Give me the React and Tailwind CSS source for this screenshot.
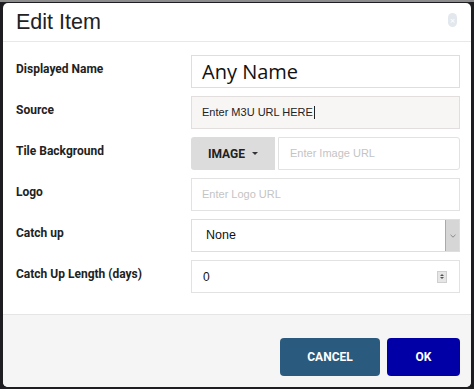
import React from "react";

function Row({ label, children }) {
  return (
    <div className="flex items-start h-[33px]">
      <div className="w-[188px] pt-[7px] pl-[13px] text-[12px] font-bold text-[#222] leading-[14px]" style={{ fontFamily: "Roboto, 'Liberation Sans', sans-serif" }}>
        {label}
      </div>
      <div className="flex-1 h-[33px]">{children}</div>
    </div>
  );
}

export default function App() {
  const f = { fontFamily: "Roboto, 'Liberation Sans', sans-serif" };
  const a = { fontFamily: "'Liberation Sans', Arial, sans-serif" };
  return (
    <div className="w-[474px] h-[389px] bg-[#1e1e22] border-t-[2px] border-[#8c8c8c] overflow-hidden">
      <div className="ml-[3px] mr-[3px] mt-[1px] h-[384px] bg-white rounded-[5px] flex flex-col overflow-hidden">
        <div className="h-[39px] flex items-center justify-between pl-[13px] pr-[14px] border-b border-[#e8e8e8]">
          <div className="text-[21.5px] text-[#222] leading-none pt-[2px]" style={a}>Edit Item</div>
          <div className="w-[9px] h-[14px] rounded-full bg-[#e3e7ee] flex items-center justify-center text-white text-[9px] leading-none mt-[-4px]">×</div>
        </div>
        <div className="flex flex-col gap-[8px] pt-[13px] pr-[11px] pb-[21px]">
          <Row label="Displayed Name">
            <div className="h-full border border-[#dedede] bg-white flex items-center pl-[10px] text-[20px] text-[#111]" style={{ fontFamily: "'Open Sans', sans-serif" }}>Any Name</div>
          </Row>
          <Row label="Source">
            <div className="h-full border border-[#e2dede] bg-[#f8f5f5] flex items-center pl-[10px] text-[11px] text-[#222]" style={a}>
              Enter M3U URL HERE<span className="inline-block w-[1px] h-[13px] bg-[#222] ml-[1px]"></span>
            </div>
          </Row>
          <Row label="Tile Background">
            <div className="h-full flex">
              <div className="w-[84px] h-full bg-[#dcdcdc] rounded-l-[3px] flex items-center justify-center gap-[7px] text-[12px] font-bold text-[#222]" style={f}>
                IMAGE
                <span className="w-0 h-0 border-l-[3px] border-r-[3px] border-t-[3px] border-l-transparent border-r-transparent border-t-[#333]"></span>
              </div>
              <div className="flex-1 ml-[3px] h-full border border-[#e2e2e2] rounded-r-[3px] bg-white flex items-center pl-[11px] text-[11px] text-[#c4c4c4]" style={a}>Enter Image URL</div>
            </div>
          </Row>
          <Row label="Logo">
            <div className="h-full border border-[#e2e2e2] bg-white flex items-center pl-[10px] text-[11px] text-[#c4c4c4]" style={a}>Enter Logo URL</div>
          </Row>
          <Row label="Catch up">
            <div className="h-full border border-[#dedede] bg-white flex items-center justify-between pl-[14px] text-[12.5px] text-[#111]" style={a}>
              None
              <div className="w-[14px] h-full bg-[#d6d6d6] border-l border-[#aaa] flex items-center justify-center">
                <svg width="6" height="4" viewBox="0 0 6 4"><path d="M0.5 0.8 L3 3.2 L5.5 0.8" fill="none" stroke="#8a8a8a" strokeWidth="1" /></svg>
              </div>
            </div>
          </Row>
          <Row label="Catch Up Length (days)">
            <div className="h-full border border-[#e2e2e2] bg-white flex items-center justify-between pl-[11px] pr-[12px] text-[12px] text-[#111]" style={a}>
              0
              <div className="w-[10px] h-[12px] bg-[#e6e6e6] border border-[#cfcfcf] flex flex-col items-center justify-center gap-[1px]">
                <span className="w-0 h-0 border-l-[2px] border-r-[2px] border-b-[2px] border-l-transparent border-r-transparent border-b-[#555]"></span>
                <span className="w-0 h-0 border-l-[2px] border-r-[2px] border-t-[2px] border-l-transparent border-r-transparent border-t-[#555]"></span>
              </div>
            </div>
          </Row>
        </div>
        <div className="flex-1 bg-[#f5f5f5] border-t border-[#e5e5e5] flex justify-end items-start pt-[23px] pr-[11px] gap-[7px]">
          <button className="w-[100px] h-[38px] rounded-[4px] bg-[#2a5b7e] text-white text-[12px] font-bold" style={f}>CANCEL</button>
          <button className="w-[73px] h-[38px] rounded-[4px] bg-[#0000a6] text-white text-[12px] font-bold" style={f}>OK</button>
        </div>
      </div>
    </div>
  );
}
